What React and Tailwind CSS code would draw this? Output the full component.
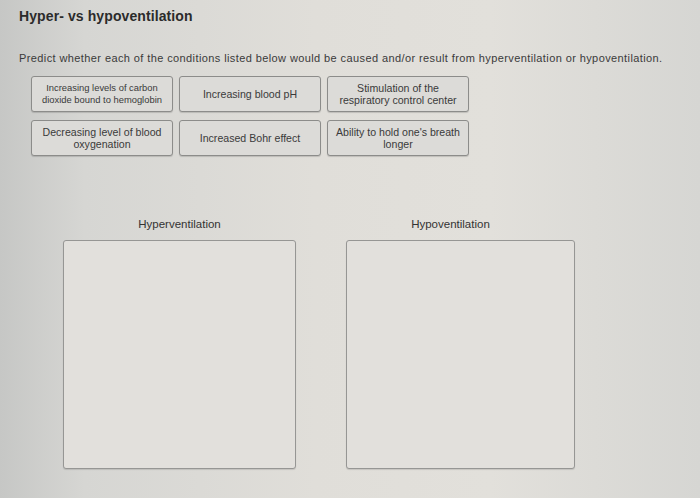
import React from "react"

const options = [
  ["Increasing levels of carbon", "dioxide bound to hemoglobin"],
  ["Increasing blood pH"],
  ["Stimulation of the", "respiratory control center"],
  ["Decreasing level of blood", "oxygenation"],
  ["Increased Bohr effect"],
  ["Ability to hold one's breath", "longer"],
]

function Chip({ lines, small }) {
  return (
    <div className="flex h-[36px] w-[142px] flex-col items-center justify-center rounded-[3px] border border-[#8c8c8a] bg-[#dcdbd8] text-center leading-[12px] text-[#3a3a3a] shadow-[0_1px_1px_rgba(0,0,0,0.15)]">
      {lines.map((l) => (
        <span key={l} className={small ? "text-[9.4px]" : "text-[10.6px]"}>
          {l}
        </span>
      ))}
    </div>
  )
}

function DropZone({ label, offset, width }) {
  return (
    <div className="flex flex-col items-center">
      <div className={`text-[11.5px] text-[#333] ${offset}`}>{label}</div>
      <div className={`mt-[7px] h-[229px] rounded-[3px] border border-[#969694] bg-[#e2e0dc] shadow-[0_1px_1px_rgba(0,0,0,0.12)] ${width}`} />
    </div>
  )
}

export default function App() {
  return (
    <div
      className="h-[498px] w-[700px] overflow-hidden bg-[linear-gradient(90deg,#c6c7c5_0%,#d6d6d3_12%,#e0ded9_45%,#e2e0db_70%,#d6d6d3_100%)] font-['Liberation_Sans',Arial,sans-serif]"
    >
      <div className="pl-[19px] pt-[6px] text-[14px] tracking-[0.1px] font-bold text-[#2b2b2b]">
        Hyper- vs hypoventilation
      </div>
      <div className="mt-[23px] pl-[19px] text-[11px] tracking-[0.4px] text-[#3a3a3a]">
        Predict whether each of the conditions listed below would be caused and/or result from hyperventilation or hypoventilation.
      </div>
      <div className="ml-[31px] mt-[9px] grid w-[438px] grid-cols-3 gap-x-[6px] gap-y-[8px]">
        {options.map((o, i) => (
          <Chip key={i} lines={o} small={i === 0} />
        ))}
      </div>
      <div className="ml-[63px] mt-[60px] flex gap-[50px]">
        <DropZone label="Hyperventilation" offset="" width="w-[233px]" />
        <DropZone label="Hypoventilation" offset="ml-[-20px]" width="w-[229px]" />
      </div>
    </div>
  )
}
